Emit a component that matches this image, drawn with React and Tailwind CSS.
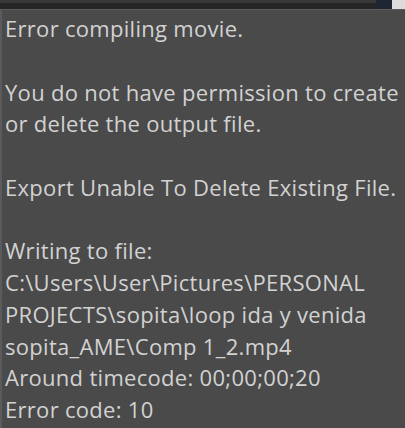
import React from "react";

const lines = [
  "Error compiling movie.",
  "",
  "You do not have permission to create",
  "or delete the output file.",
  "",
  "Export Unable To Delete Existing File.",
  "",
  "Writing to file:",
  "C:\\Users\\User\\Pictures\\PERSONAL",
  "PROJECTS\\sopita\\loop ida y venida",
  "sopita_AME\\Comp 1_2.mp4",
  "Around timecode: 00;00;00;20",
  "Error code: 10",
];

export default function App() {
  return (
    <div className="w-[405px] h-[428px] overflow-hidden bg-[#4a4a4a] flex flex-col">
      {/* window strip behind the tooltip */}
      <div className="h-[9px] flex shrink-0">
        <div className="flex-1 bg-[#262626] border-t-[3px] border-[#383838]" />
        <div className="w-[16px] bg-[#1d2633]" />
        <div className="w-[13px] bg-[#dcdcdc]" />
      </div>

      {/* error message */}
      <div className="flex-1 border-l-[2px] border-t border-[#5b5b5b] pl-[3px] pt-[3px]">
        <div className="text-[22px] leading-[31.75px] tracking-[0.3px] text-[#d2d2d2] whitespace-nowrap font-['Open_Sans',sans-serif]">
          {lines.map((l, i) => (
            <div key={i} className="h-[31.75px]">{l}</div>
          ))}
        </div>
      </div>
    </div>
  );
}
